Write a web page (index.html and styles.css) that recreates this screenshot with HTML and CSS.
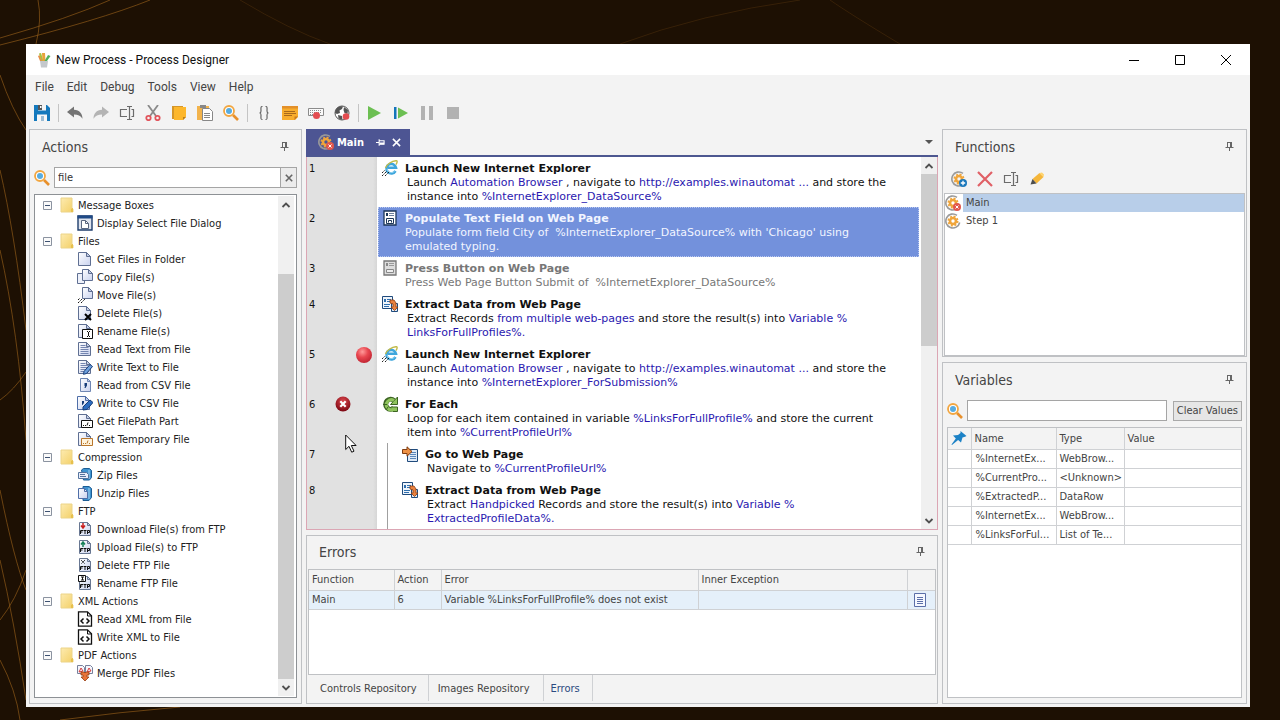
FILE: index.html
```html
<!DOCTYPE html>
<html lang="en">
<head>
  <meta charset="UTF-8">
  <meta name="viewport" content="width=device-width, initial-scale=1.0">
  <title>New Process - Process Designer</title>
  <link rel="stylesheet" href="styles.css">
</head>
<body>
  <!-- icon sprite -->
  <svg class="sprite" aria-hidden="true">
    <defs>
      <linearGradient id="paper" x1="0" y1="0" x2="1" y2="1">
        <stop offset="0" stop-color="#fff"/><stop offset="1" stop-color="#c9d2ee"/>
      </linearGradient>
      <linearGradient id="fold" x1="0" y1="0" x2="1" y2="1">
        <stop offset="0" stop-color="#fdebb0"/><stop offset="1" stop-color="#f3d068"/>
      </linearGradient>
      <radialGradient id="ball" cx="0.4" cy="0.3" r="0.7">
        <stop offset="0" stop-color="#ff9a9a"/><stop offset="0.5" stop-color="#e8464f"/><stop offset="1" stop-color="#c22634"/>
      </radialGradient>
      <radialGradient id="stopball" cx="0.5" cy="0.3" r="0.7">
        <stop offset="0" stop-color="#d9444b"/><stop offset="1" stop-color="#7c0712"/>
      </radialGradient>
    </defs>
    <symbol id="i-page" viewBox="0 0 16 16">
      <path d="M1.500 1.500h8l4 4v9h-12z" fill="url(#paper)" stroke="#5f6f92"/>
      <path d="M9.500 1.500v4h4z" fill="#c3cce4" stroke="#5f6f92"/>
    </symbol>
    <symbol id="i-folder" viewBox="0 0 14 16">
      <path d="M1 1h11v10l1 1v3H1z" fill="url(#fold)" stroke="#ecd488"/>
      <path d="M11 15v-3l2-1v4z" fill="#e7c04c"/>
    </symbol>
    <symbol id="i-minus" viewBox="0 0 9 9">
      <path d="M.5.5h8v8h-8z" fill="#fafafa" stroke="#8b93a0"/><path d="M2 4.500h5" stroke="#3d5172"/>
    </symbol>
    <symbol id="i-dialog" viewBox="0 0 16 16">
      <path d="M1 1h14v14H1z" fill="#dfe4ee" stroke="#1f3e6d" stroke-width="1.400"/><path d="M.5.5h15v3H.5z" fill="#1f4a86"/>
      <path d="M4.500 5.500h4l3 3v5h-7z" fill="#fff" stroke="#5a6680"/><path d="M8.500 5.500v3h3" fill="none" stroke="#5a6680"/>
    </symbol>
    <symbol id="i-copyfile" viewBox="0 0 16 16">
      <path d="M.5 4.500h7v10h-7z" fill="#eef1fa" stroke="#5f6f92"/>
      <path d="M5.500.5h6l4 4v7h-10z" fill="url(#paper)" stroke="#5f6f92"/><path d="M11.500.5v4h4z" fill="#c3cce4" stroke="#5f6f92"/>
    </symbol>
    <symbol id="i-movefile" viewBox="0 0 16 16">
      <path d="M5.500.5h6l4 4v7h-10z" fill="url(#paper)" stroke="#5f6f92"/><path d="M11.500.5v4h4z" fill="#c3cce4" stroke="#5f6f92"/>
      <path d="M1 13l2-2M1 16l4-4M4 16l4-4" stroke="#111" stroke-dasharray="1.500 .7"/>
    </symbol>
    <symbol id="i-delfile" viewBox="0 0 16 16">
      <use href="#i-page"/><path d="M8 9l6 6M14 9l-6 6" stroke="#000" stroke-width="2"/>
    </symbol>
    <symbol id="i-renfile" viewBox="0 0 16 16">
      <use href="#i-page"/><path d="M5.500 6.500h10v9h-10z" fill="#fff" stroke="#111"/>
      <path d="M10 8.500h1m1 0h1M11.500 9v4M10 13.500h1m1 0h1" stroke="#111"/>
    </symbol>
    <symbol id="i-text" viewBox="0 0 16 16">
      <use href="#i-page"/><path d="M3.500 4.500h5M3.500 6.500h8M3.500 8.500h8M3.500 10.500h8M3.500 12.500h8" stroke="#7485b0"/>
    </symbol>
    <symbol id="i-writetext" viewBox="0 0 16 16">
      <use href="#i-text"/><path d="M7 12.500l6-7 2.500 2-6 7-3 .8z" fill="#6fa0dc" stroke="#173d78"/>
    </symbol>
    <symbol id="i-csv" viewBox="0 0 16 16">
      <path d="M3.500 1.500h7l3 3v10h-10z" fill="url(#paper)" stroke="#6f86b3"/><path d="M10.500 1.500v3h3z" fill="#c3cce4" stroke="#6f86b3"/>
      <path d="M7.500 6H10v2.500L8.500 11H7.500l.5-2h-.5z" fill="#173d78"/>
    </symbol>
    <symbol id="i-writecsv" viewBox="0 0 16 16">
      <path d="M.5 1.500h8l4 4v9H.5z" fill="url(#paper)" stroke="#4f6ea8"/><path d="M8.500 1.500v4h4z" fill="#c3cce4" stroke="#4f6ea8"/>
      <path d="M5 6h2v2l-1.500 2H5z" fill="#173d78"/><path d="M6 12l7-7 3 2.500-6 7-4 .5z" fill="#2c6cc0" stroke="#173d78"/>
    </symbol>
    <symbol id="i-pathpart" viewBox="0 0 16 16">
      <use href="#i-page"/><path d="M4.500 7.500h11v7h-11z" fill="#fff" stroke="#111"/><path d="M6 12.500h1m1 0h1m1 0l1-3M12 12.500h1" stroke="#111"/>
    </symbol>
    <symbol id="i-temp" viewBox="0 0 16 16">
      <use href="#i-page"/><path d="M4.500 7.500h11v7h-11z" fill="#fff3dc" stroke="#b9762b"/><path d="M6 12.500h1m1 0h1m1 0l1-3M12 12.500h1" stroke="#b9762b"/>
    </symbol>
    <symbol id="i-zip" viewBox="0 0 16 16">
      <path d="M4.500 3l2-1.500h6l2 2v7l-2 2.500h-6z" fill="#3f93cf" stroke="#1c5d95"/><path d="M12 3v9" stroke="#a8d4f2"/>
      <path d="M1.500 5.500h8l2 2v4h-10z" fill="#e8eefb" stroke="#56749e"/><path d="M3 7.500h5M3 9.500h6" stroke="#56749e"/>
    </symbol>
    <symbol id="i-unzip" viewBox="0 0 16 16">
      <path d="M6 1.500h6l2.500 2v9l-2.500 3H6z" fill="#3f93cf" stroke="#1c5d95"/><path d="M12 3v11" stroke="#a8d4f2"/>
      <path d="M1.500 3.500h6l3 3v7h-9z" fill="url(#paper)" stroke="#4f6ea8"/><path d="M7.500 3.500v3h3" fill="none" stroke="#4f6ea8"/>
    </symbol>
    <symbol id="i-ftp" viewBox="0 0 16 16">
      <path d="M2.500 1.500h8l3 3v10h-11z" fill="url(#paper)" stroke="#687792"/><path d="M10.500 1.500v3h3z" fill="#c3cce4" stroke="#687792"/>
      <path d="M3.500 13V9.500H6M3.500 11h2M6.500 9.500h3M8 9.500V13M10.500 13V9.500h2v2h-2" fill="none" stroke="#111"/>
    </symbol>
    <symbol id="i-ftpdown" viewBox="0 0 16 16"><use href="#i-ftp"/><path d="M6 2v5M4 4.500L6 7l2-2.500" fill="none" stroke="#c81e1e" stroke-width="1.500"/></symbol>
    <symbol id="i-ftpup" viewBox="0 0 16 16"><use href="#i-ftp"/><path d="M6 8V3M4 5.500L6 3l2 2.500" fill="none" stroke="#16805a" stroke-width="1.500"/></symbol>
    <symbol id="i-ftpdel" viewBox="0 0 16 16"><use href="#i-ftp"/><path d="M4 3l4 4M8 3L4 7" stroke="#222" stroke-dasharray="1.200 .5"/></symbol>
    <symbol id="i-ftpren" viewBox="0 0 16 16"><use href="#i-ftp"/><path d="M1.500.5h7v6h-7z" fill="#fff" stroke="#111"/><path d="M4 2h3M5.500 2v3M4 5h3" stroke="#111"/></symbol>
    <symbol id="i-xml" viewBox="0 0 16 16">
      <path d="M1.500.8h9l4 4v10.400h-13z" fill="#fff" stroke="#111" stroke-width="1.300"/><path d="M10.500 1v4h4" fill="none" stroke="#111"/>
      <path d="M6.500 7.500L4 10l2.500 2.500M9.500 7.500L12 10l-2.500 2.500" fill="none" stroke="#111" stroke-width="1.500"/>
    </symbol>
    <symbol id="i-pdf" viewBox="0 0 16 16">
      <path d="M.5.500h5l2 2v6h-7zM8.500.500h5l2 2v6h-7z" fill="#f4f5fb" stroke="#77819c"/>
      <path d="M2 7l2-4 2 3-4 1M10 7l2-4 2 3-4 1" fill="none" stroke="#d93a3a"/>
      <path d="M4 7h3l1 1 1-1h3v3h-2v2h2l-4 4-4-4h2v-2H4z" fill="#e8743a" stroke="#963c12" stroke-width=".8"/>
    </symbol>

    <symbol id="i-app" viewBox="0 0 16 16">
      <path d="M3 1.500l2-.5 2.500 8H5z" fill="#a9c23f"/><path d="M6 1h3l.5 8h-3z" fill="#e8a33a"/><path d="M8.500 9l3.500-6 2.500 1-3.500 5z" fill="#4fb05a"/>
      <path d="M2 4l1.500-.8L6 9H4z" fill="#e58f45"/><path d="M4 9h8l-1 6.500H5z" fill="#c4c8cc"/>
    </symbol>
    <symbol id="i-save" viewBox="0 0 16 16">
      <path d="M0 0h13l3 3v13H0z" fill="#1479bd"/><path d="M4 0h8v5.500H4z" fill="#f4f4f4"/><path d="M4 0h4v5H4z" fill="#555"/><path d="M6 1h1.500v2H6z" fill="#fff"/>
      <path d="M3 9.500h10V16H3z" fill="#f7f7f7"/><path d="M7 11h3v5H7z" fill="#9bbcd4"/>
    </symbol>
    <symbol id="i-undo" viewBox="0 0 16 16"><path d="M0 7l7-5.500v3.300c5.500.3 8.500 3.800 8.500 9C13.500 10.600 11 9.500 7 9.500v3z" fill="#747474"/></symbol>
    <symbol id="i-redo" viewBox="0 0 16 16"><path d="M16 7L9 1.500v3.300C3.500 5.100.5 8.600.5 13.800 2.500 10.600 5 9.500 9 9.500v3z" fill="#b4b4b4"/></symbol>
    <symbol id="i-rename" viewBox="0 0 16 16"><path d="M8 4.500H1.500v7H8M12.500 4.500h2v7h-2M8 1.500h5M10.500 1.500v13M8 14.500h5" fill="none" stroke="#6b6b6b" stroke-width="1.200"/></symbol>
    <symbol id="i-cut" viewBox="0 0 16 16">
      <path d="M3 0l8 11M13 0L5 11" stroke="#8a8a8a" stroke-width="1.800"/><circle cx="3.500" cy="13" r="2.200" fill="none" stroke="#e2545c" stroke-width="1.800"/><circle cx="12.500" cy="13" r="2.200" fill="none" stroke="#e2545c" stroke-width="1.800"/>
    </symbol>
    <symbol id="i-copy" viewBox="0 0 16 16"><path d="M1 1h11v13H1z" fill="#d59628"/><path d="M3 2h12v10l-3 3H3z" fill="#fdb72b"/><path d="M12 12h3l-3 3z" fill="#b97f1c"/></symbol>
    <symbol id="i-paste" viewBox="0 0 16 16"><path d="M0 1h12v14H0z" fill="#f2b34c"/><path d="M3 0h6v3H3z" fill="#888"/><path d="M5.500 3.500h7l3 3v9h-10z" fill="#fff" stroke="#888"/><path d="M7 8.500h6M7 10.500h6M7 12.500h6" stroke="#888"/></symbol>
    <symbol id="i-search" viewBox="0 0 16 16"><path d="M10 10l5 5" stroke="#e8902c" stroke-width="2.600"/><circle cx="6" cy="6" r="5" fill="#fff" stroke="#f2a640" stroke-width="1.800"/><circle cx="6" cy="6" r="3" fill="#58ace0"/></symbol>
    <symbol id="i-braces" viewBox="0 0 16 16"><path d="M6.500 1.500H6C4.500 1.500 5 4 5 6S4 8 3.500 8C4 8 5 8 5 10s-.5 4.500 1 4.500h.5M9.500 1.500h.5c1.500 0 1 2.500 1 4.500s1 2 1.500 2c-.5 0-1.500 0-1.500 2s.5 4.500-1 4.500h-.5" fill="none" stroke="#666" stroke-width="1.200"/></symbol>
    <symbol id="i-note" viewBox="0 0 16 16"><path d="M0 1h16v11l-3 3H0z" fill="#f8ad2d"/><path d="M0 1h16v2.500H0z" fill="#e3902a"/><path d="M2 6.500h11M2 8.500h12M2 10.500h8" stroke="#a86a1c"/><path d="M12.500 11.500H16L12.500 15z" fill="#c87a1c"/></symbol>
    <symbol id="i-keys" viewBox="0 0 16 16"><path d="M.5 3.500h15v7H.5z" fill="#fafafa" stroke="#8b8b8b"/><path d="M2 5.500h12M2 7.500h12M2 9.500h3" stroke="#8b8b8b" stroke-dasharray="1 1"/><circle cx="8.500" cy="10.500" r="3.500" fill="#e44c50"/></symbol>
    <symbol id="i-globe" viewBox="0 0 16 16"><circle cx="8" cy="8" r="7" fill="#fff" stroke="#555"/><path d="M1.500 5C4 1 7 .8 9 1.500L8 4 5.500 5.500 6 8l-3 1-2-1zM10 2l4 3-.5 4-3-1-1-3zM4 10l4 1 .5 4-4-1.500z" fill="#555"/><circle cx="12" cy="11.500" r="3.300" fill="#e44c50"/></symbol>
    <symbol id="i-play" viewBox="0 0 16 16"><path d="M1 1l13 7-13 7z" fill="#6cbf52"/></symbol>
    <symbol id="i-step" viewBox="0 0 16 16"><path d="M1 2h2.500v12H1z" fill="#1475ba"/><path d="M5 2.500L15 8 5 13.500z" fill="#6cbf52"/></symbol>
    <symbol id="i-pause" viewBox="0 0 16 16"><path d="M2 1h4v14H2zM10 1h4v14h-4z" fill="#b2b2b2"/></symbol>
    <symbol id="i-stop" viewBox="0 0 16 16"><path d="M2 2h12v12H2z" fill="#b2b2b2"/></symbol>
    <symbol id="i-gear" viewBox="0 0 16 16">
      <path d="M12 2.300A7 7 0 1 0 14.700 9.500" fill="none" stroke="#9a9a9a" stroke-width="1.600"/>
      <circle cx="8" cy="8" r="3" fill="none" stroke="#f0a53a" stroke-width="2.600"/><circle cx="8" cy="8" r="4.700" fill="none" stroke="#f0a53a" stroke-width="1.600" stroke-dasharray="2 1.690"/>
    </symbol>
    <symbol id="i-gearx" viewBox="0 0 16 16"><use href="#i-gear"/><circle cx="12" cy="12" r="4" fill="#e2574c"/><path d="M10.500 10.500l3 3M13.500 10.500l-3 3" stroke="#fff"/></symbol>
    <symbol id="i-gearadd" viewBox="0 0 16 16"><use href="#i-gear"/><circle cx="12" cy="12" r="4" fill="#1b78bb"/><path d="M12 9.800v4.400M9.800 12h4.400" stroke="#fff" stroke-width="1.300"/></symbol>
    <symbol id="i-redx" viewBox="0 0 16 16"><path d="M1 1l14 14M15 1L1 15" stroke="#e06066" stroke-width="2.200"/></symbol>
    <symbol id="i-pencil" viewBox="0 0 16 16"><path d="M3.500 8l7-6 4 4-7 6.500z" fill="#f5b63a"/><path d="M10.500 2l2.500-.5L15 3.500 14.500 6z" fill="#ffd36b"/><path d="M1.500 13.500l2-5.500 4 4.500z" fill="#4d4d4d"/></symbol>
    <symbol id="i-pin" viewBox="0 0 9 9"><path d="M2.500.5v5M6.500.5v5M2 .5h5M.5 5.500h8M4.500 6v3" fill="none" stroke="#666"/><path d="M5 1h1.500v4H5z" fill="#666"/></symbol>
    <symbol id="i-bluepin" viewBox="0 0 16 16"><path d="M9.500 1l6 5-1.500.7-2.500.8-1.500 5-2.900-2.400L1 15l-.5-.5 4.300-6L2 5.500l5-.5 2.500-2z" fill="#1c82c6"/></symbol>
    <symbol id="i-up" viewBox="0 0 10 10"><path d="M1.500 7L5 3.500 8.500 7" fill="none" stroke="#505050" stroke-width="1.800"/></symbol>
    <symbol id="i-down" viewBox="0 0 10 10"><path d="M1.500 3L5 6.500 8.500 3" fill="none" stroke="#505050" stroke-width="1.800"/></symbol>

    <symbol id="i-ie" viewBox="0 0 16 16">
      <path d="M13.500 11A4.800 4.800 0 1 1 14 7.700H6" fill="none" stroke="#3fa6dc" stroke-width="2.600"/>
      <path d="M13 10.500A4.300 4.300 0 0 1 5 9" fill="none" stroke="#8fd3f2"/>
      <path d="M3.500 8C4.500 4.500 10 .5 14.500.7 15.700 1 15 3 14 4.500" fill="none" stroke="#c2bb4a" stroke-width="1.400"/>
      <path d="M0 13l3-3M0 16l5-5M3 16l4-4" stroke="#222" stroke-dasharray="1.500 .6"/>
    </symbol>
    <symbol id="i-form" viewBox="0 0 16 16">
      <path d="M2 1h12v14H2z" fill="#fff" stroke="#1c3659" stroke-width="1.300"/><path d="M4 3h2v3H4z" fill="#1c3659"/><path d="M7 3.500h5M7 5.500h5" stroke="#6c7f9b"/>
      <path d="M4.500 8.500h7v5h-7z" fill="#fff" stroke="#1c3659"/><path d="M6.500 12.500v-2h3v2" fill="none" stroke="#1c3659"/>
    </symbol>
    <symbol id="i-formgrey" viewBox="0 0 16 16">
      <path d="M2 1h12v14H2z" fill="#ddd" stroke="#777" stroke-width="1.300"/><path d="M4 3h2v3H4z" fill="#888"/><path d="M7 3.500h5M7 5.500h5" stroke="#999"/><path d="M4.500 9.500h7v3h-7z" fill="#eee" stroke="#888"/>
    </symbol>
    <symbol id="i-extract" viewBox="0 0 16 16">
      <path d="M.5.5h10v12H.5z" fill="#eef4fb" stroke="#1f4a7c"/><path d="M2 3h2v3H2z" fill="#2f6fae"/><path d="M5 3.500h4M5 5.500h4M2 8.500h6M2 10.500h5" stroke="#2f6fae"/>
      <path d="M9.500 7.500h6v8h-6z" fill="#dbe9f7" stroke="#1f4a7c"/><path d="M8 4h4l2 3v4h2l-3.500 3.500L9 11h2V8L8 7z" fill="#e98240" stroke="#8a3c12" stroke-width=".8"/>
    </symbol>
    <symbol id="i-loop" viewBox="0 0 16 16">
      <path d="M12 4.500A5 5 0 1 0 12 12" fill="none" stroke="#3c6423" stroke-width="5"/>
      <path d="M11 15.500h4.500v-4.500H9" fill="#8fc45c" stroke="#3c6423"/>
      <path d="M8.500 8.500h7V1z" fill="#8fc45c" stroke="#3c6423"/>
      <path d="M12 4.500A5 5 0 1 0 12 13" fill="none" stroke="#8fc45c" stroke-width="3"/>
      <path d="M1 8.500h4M4 14l2-3" stroke="#3c6423"/>
    </symbol>
    <symbol id="i-goto" viewBox="0 0 16 16">
      <path d="M5.500 3.500h10v12h-10z" fill="#dfeaf7" stroke="#1f4a7c"/><path d="M8 6.500h6M8 8.500h6M8 10.500h6M8 12.500h6" stroke="#5b86ba"/>
      <path d="M.5 3.500H5V.8l5 4.700-5 4.700V7.500H.5z" fill="#ee9145" stroke="#7e3c12"/>
    </symbol>
    <symbol id="i-break" viewBox="0 0 16 16"><circle cx="8" cy="8" r="8" fill="url(#ball)"/></symbol>
    <symbol id="i-error" viewBox="0 0 16 16"><circle cx="8" cy="8" r="7.500" fill="url(#stopball)"/><path d="M5.300 5.300l5.400 5.400M10.700 5.300l-5.400 5.400" stroke="#fff" stroke-width="2.200"/></symbol>
    <symbol id="i-cursor" viewBox="0 0 12 19"><path d="M.7 1v14.500L4 12.300l2.700 5.900 2.300-1-2.700-5.700h4.800z" fill="#fff" stroke="#111"/></symbol>
    <symbol id="i-detail" viewBox="0 0 12 14"><path d="M.5.5h11v13H.5z" fill="#f5f8ff" stroke="#5b6fa8"/><path d="M3 4.500h6M3 6.500h6M3 8.500h6M3 10.500h6" stroke="#5b6fa8"/></symbol>
  </svg>

  <!-- desktop wallpaper -->
  <svg class="wallpaper" viewBox="0 0 1280 720" preserveAspectRatio="none" aria-hidden="true">
    <g fill="none" stroke="#a0651c" stroke-opacity=".6">
      <path d="M0 38Q70 18 110 0M0 45Q100 20 150 0M36 44Q42 20 38 0M0 75Q12 110 26 130"/>
      <path d="M0 170Q14 230 26 330M0 250Q18 330 26 440M0 400Q14 390 26 372M0 490Q14 560 26 590M0 620Q16 600 26 570M0 560Q14 620 26 700"/>
      <path d="M240 0Q290 30 330 44M620 44Q700 14 800 0M900 44Q850 14 830 0" stroke-opacity=".2"/>
      <path d="M60 720Q120 712 180 707M0 660Q16 690 20 720"/>
    </g>
  </svg>

  <main class="window">
    <header class="titlebar">
      <svg class="icon"><use href="#i-app"/></svg>
      <h1>New Process - Process Designer</h1>
      <div class="window-buttons">
        <button aria-label="Minimize"><svg viewBox="0 0 10 10"><path d="M0 5.500h10" stroke="#000"/></svg></button>
        <button aria-label="Maximize"><svg viewBox="0 0 10 10"><path d="M.5.5h9v9h-9z" fill="none" stroke="#000"/></svg></button>
        <button aria-label="Close"><svg viewBox="0 0 10 10"><path d="M0 0l10 10M10 0L0 10" stroke="#000"/></svg></button>
      </div>
    </header>

    <nav class="menu">
      <button>File</button><button>Edit</button><button>Debug</button><button>Tools</button><button>View</button><button>Help</button>
    </nav>

    <div class="toolbar main-toolbar">
      <button aria-label="Save"><svg class="icon"><use href="#i-save"/></svg></button>
      <span class="sep"></span>
      <button aria-label="Undo"><svg class="icon"><use href="#i-undo"/></svg></button>
      <button aria-label="Redo"><svg class="icon"><use href="#i-redo"/></svg></button>
      <button aria-label="Rename"><svg class="icon"><use href="#i-rename"/></svg></button>
      <button aria-label="Cut"><svg class="icon"><use href="#i-cut"/></svg></button>
      <button aria-label="Copy"><svg class="icon"><use href="#i-copy"/></svg></button>
      <button aria-label="Paste"><svg class="icon"><use href="#i-paste"/></svg></button>
      <button aria-label="Find"><svg class="icon"><use href="#i-search"/></svg></button>
      <span class="sep"></span>
      <button aria-label="Variables"><svg class="icon"><use href="#i-braces"/></svg></button>
      <button aria-label="Comment"><svg class="icon"><use href="#i-note"/></svg></button>
      <button aria-label="Macro recorder"><svg class="icon"><use href="#i-keys"/></svg></button>
      <button aria-label="Web recorder"><svg class="icon"><use href="#i-globe"/></svg></button>
      <span class="sep"></span>
      <button aria-label="Run"><svg class="icon"><use href="#i-play"/></svg></button>
      <button aria-label="Step"><svg class="icon"><use href="#i-step"/></svg></button>
      <button aria-label="Pause"><svg class="icon"><use href="#i-pause"/></svg></button>
      <button aria-label="Stop"><svg class="icon"><use href="#i-stop"/></svg></button>
    </div>

    <div class="workspace">
      <section class="panel actions">
        <div class="panel-head"><h2>Actions</h2><button aria-label="Pin"><svg class="pin"><use href="#i-pin"/></svg></button></div>
        <div class="search">
          <svg class="icon"><use href="#i-search"/></svg>
          <div class="search-box">
            <input type="text" value="file" aria-label="Search actions">
            <button aria-label="Clear"><svg viewBox="0 0 10 10"><path d="M1 1l8 8M9 1L1 9" stroke="#666" stroke-width="2"/></svg></button>
          </div>
        </div>
        <div class="tree-box">
          <ul class="tree">
            <li class="group"><svg class="toggle"><use href="#i-minus"/></svg><svg class="folder"><use href="#i-folder"/></svg>Message Boxes</li>
            <li><svg class="icon"><use href="#i-dialog"/></svg>Display Select File Dialog</li>
            <li class="group"><svg class="toggle"><use href="#i-minus"/></svg><svg class="folder"><use href="#i-folder"/></svg>Files</li>
            <li><svg class="icon"><use href="#i-page"/></svg>Get Files in Folder</li>
            <li><svg class="icon"><use href="#i-copyfile"/></svg>Copy File(s)</li>
            <li><svg class="icon"><use href="#i-movefile"/></svg>Move File(s)</li>
            <li><svg class="icon"><use href="#i-delfile"/></svg>Delete File(s)</li>
            <li><svg class="icon"><use href="#i-renfile"/></svg>Rename File(s)</li>
            <li><svg class="icon"><use href="#i-text"/></svg>Read Text from File</li>
            <li><svg class="icon"><use href="#i-writetext"/></svg>Write Text to File</li>
            <li><svg class="icon"><use href="#i-csv"/></svg>Read from CSV File</li>
            <li><svg class="icon"><use href="#i-writecsv"/></svg>Write to CSV File</li>
            <li><svg class="icon"><use href="#i-pathpart"/></svg>Get FilePath Part</li>
            <li><svg class="icon"><use href="#i-temp"/></svg>Get Temporary File</li>
            <li class="group"><svg class="toggle"><use href="#i-minus"/></svg><svg class="folder"><use href="#i-folder"/></svg>Compression</li>
            <li><svg class="icon"><use href="#i-zip"/></svg>Zip Files</li>
            <li><svg class="icon"><use href="#i-unzip"/></svg>Unzip Files</li>
            <li class="group"><svg class="toggle"><use href="#i-minus"/></svg><svg class="folder"><use href="#i-folder"/></svg>FTP</li>
            <li><svg class="icon"><use href="#i-ftpdown"/></svg>Download File(s) from FTP</li>
            <li><svg class="icon"><use href="#i-ftpup"/></svg>Upload File(s) to FTP</li>
            <li><svg class="icon"><use href="#i-ftpdel"/></svg>Delete FTP File</li>
            <li><svg class="icon"><use href="#i-ftpren"/></svg>Rename FTP File</li>
            <li class="group"><svg class="toggle"><use href="#i-minus"/></svg><svg class="folder"><use href="#i-folder"/></svg>XML Actions</li>
            <li><svg class="icon"><use href="#i-xml"/></svg>Read XML from File</li>
            <li><svg class="icon"><use href="#i-xml"/></svg>Write XML to File</li>
            <li class="group"><svg class="toggle"><use href="#i-minus"/></svg><svg class="folder"><use href="#i-folder"/></svg>PDF Actions</li>
            <li><svg class="icon"><use href="#i-pdf"/></svg>Merge PDF Files</li>
          </ul>
          <div class="scrollbar tree-scroll">
            <button aria-label="Scroll up"><svg><use href="#i-up"/></svg></button>
            <div class="track"><div class="thumb"></div></div>
            <button aria-label="Scroll down"><svg><use href="#i-down"/></svg></button>
          </div>
        </div>
      </section>

      <div class="column">
        <section class="editor">
          <div class="tabs">
            <div class="tab">
              <svg class="icon"><use href="#i-gearx"/></svg><span>Main</span>
              <button aria-label="Pin tab"><svg viewBox="0 0 10 10"><path d="M0 5h3M3.500 1.500v7M4 3h5v4H4" fill="none" stroke="#fff" stroke-width="1.200"/><path d="M4 5h5v2H4z" fill="#fff"/></svg></button>
              <button aria-label="Close tab"><svg viewBox="0 0 10 10"><path d="M1 1l8 8M9 1L1 9" stroke="#fff" stroke-width="1.700"/></svg></button>
            </div>
            <button class="tab-list" aria-label="Tab list"><svg viewBox="0 0 8 4"><path d="M0 0h8L4 4z" fill="#555"/></svg></button>
          </div>
          <div class="code-box">
            <ol class="code">
              <li>
                <div class="gutter"><span>1</span></div>
                <div class="step"><svg class="icon"><use href="#i-ie"/></svg>
                  <div><h3>Launch New Internet Explorer</h3>
                  <p>Launch <a href="#">Automation Browser</a> , navigate to <a href="#">http://examples.winautomat ...</a> and store the<br>instance into <a href="#">%InternetExplorer_DataSource%</a></p></div></div>
              </li>
              <li class="selected">
                <div class="gutter"><span>2</span></div>
                <div class="step"><svg class="icon"><use href="#i-form"/></svg>
                  <div><h3>Populate Text Field on Web Page</h3>
                  <p>Populate form field City of &nbsp;%InternetExplorer_DataSource% with 'Chicago' using<br>emulated typing.</p></div></div>
              </li>
              <li class="disabled">
                <div class="gutter"><span>3</span></div>
                <div class="step"><svg class="icon"><use href="#i-formgrey"/></svg>
                  <div><h3>Press Button on Web Page</h3>
                  <p>Press Web Page Button Submit of &nbsp;%InternetExplorer_DataSource%</p></div></div>
              </li>
              <li>
                <div class="gutter"><span>4</span></div>
                <div class="step"><svg class="icon"><use href="#i-extract"/></svg>
                  <div><h3>Extract Data from Web Page</h3>
                  <p>Extract Records <a href="#">from multiple web-pages</a> and store the result(s) into <a href="#">Variable %<br>LinksForFullProfiles%.</a></p></div></div>
              </li>
              <li>
                <div class="gutter"><span>5</span><svg class="icon breakpoint"><use href="#i-break"/></svg></div>
                <div class="step"><svg class="icon"><use href="#i-ie"/></svg>
                  <div><h3>Launch New Internet Explorer</h3>
                  <p>Launch <a href="#">Automation Browser</a> , navigate to <a href="#">http://examples.winautomat ...</a> and store the<br>instance into <a href="#">%InternetExplorer_ForSubmission%</a></p></div></div>
              </li>
              <li>
                <div class="gutter"><span>6</span><svg class="icon error"><use href="#i-error"/></svg><svg class="cursor"><use href="#i-cursor"/></svg></div>
                <div class="step"><svg class="icon"><use href="#i-loop"/></svg>
                  <div><h3>For Each</h3>
                  <p>Loop for each item contained in variable <a href="#">%LinksForFullProfile%</a> and store the current<br>item into <a href="#">%CurrentProfileUrl%</a></p></div></div>
              </li>
              <li class="nested">
                <div class="gutter"><span>7</span></div>
                <div class="step"><svg class="icon"><use href="#i-goto"/></svg>
                  <div><h3>Go to Web Page</h3>
                  <p>Navigate to <a href="#">%CurrentProfileUrl%</a></p></div></div>
              </li>
              <li class="nested">
                <div class="gutter"><span>8</span></div>
                <div class="step"><svg class="icon"><use href="#i-extract"/></svg>
                  <div><h3>Extract Data from Web Page</h3>
                  <p>Extract <a href="#">Handpicked</a> Records and store the result(s) into <a href="#">Variable %<br>ExtractedProfileData%.</a></p></div></div>
              </li>
            </ol>
            <div class="scrollbar code-scroll">
              <button aria-label="Scroll up"><svg><use href="#i-up"/></svg></button>
              <div class="track"><div class="thumb"></div></div>
              <button aria-label="Scroll down"><svg><use href="#i-down"/></svg></button>
            </div>
          </div>
        </section>

        <section class="panel errors">
          <div class="panel-head"><h2>Errors</h2><button aria-label="Pin"><svg class="pin"><use href="#i-pin"/></svg></button></div>
          <div class="table-box">
            <table>
              <colgroup><col class="c-func"><col class="c-action"><col class="c-error"><col class="c-inner"><col></colgroup>
              <thead><tr><th>Function</th><th>Action</th><th>Error</th><th>Inner Exception</th><th></th></tr></thead>
              <tbody><tr><td>Main</td><td>6</td><td>Variable %LinksForFullProfile% does not exist</td><td></td><td><button class="detail" aria-label="Details"><svg><use href="#i-detail"/></svg></button></td></tr></tbody>
            </table>
          </div>
          <div class="bottom-tabs">
            <button>Controls Repository</button><button>Images Repository</button><button class="active">Errors</button>
          </div>
        </section>
      </div>

      <div class="column">
        <section class="panel functions">
          <div class="panel-head"><h2>Functions</h2><button aria-label="Pin"><svg class="pin"><use href="#i-pin"/></svg></button></div>
          <div class="toolbar">
            <button aria-label="Add function"><svg class="icon"><use href="#i-gearadd"/></svg></button>
            <button aria-label="Delete function"><svg class="icon"><use href="#i-redx"/></svg></button>
            <button aria-label="Rename function"><svg class="icon"><use href="#i-rename"/></svg></button>
            <button aria-label="Edit function"><svg class="icon"><use href="#i-pencil"/></svg></button>
          </div>
          <ul class="function-list">
            <li class="current"><svg class="icon"><use href="#i-gearx"/></svg><span>Main</span></li>
            <li><svg class="icon"><use href="#i-gear"/></svg><span>Step 1</span></li>
          </ul>
        </section>

        <section class="panel variables">
          <div class="panel-head"><h2>Variables</h2><button aria-label="Pin"><svg class="pin"><use href="#i-pin"/></svg></button></div>
          <div class="search">
            <svg class="icon"><use href="#i-search"/></svg>
            <div class="search-box"><input type="text" aria-label="Search variables"></div>
            <button class="clear">Clear Values</button>
          </div>
          <div class="table-box">
            <table>
              <colgroup><col class="c-pin"><col class="c-name"><col class="c-type"><col></colgroup>
              <thead><tr><th><svg class="icon"><use href="#i-bluepin"/></svg></th><th>Name</th><th>Type</th><th>Value</th></tr></thead>
              <tbody>
                <tr><td></td><td>%InternetEx...</td><td>WebBrow...</td><td></td></tr>
                <tr><td></td><td>%CurrentPro...</td><td>&lt;Unknown&gt;</td><td></td></tr>
                <tr><td></td><td>%ExtractedP...</td><td>DataRow</td><td></td></tr>
                <tr><td></td><td>%InternetEx...</td><td>WebBrow...</td><td></td></tr>
                <tr><td></td><td>%LinksForFul...</td><td>List of Te...</td><td></td></tr>
              </tbody>
            </table>
          </div>
        </section>
      </div>
    </div>
  </main>
</body>
</html>
```
FILE: styles.css
```css
* {
  box-sizing: border-box;
}

body {
  margin: 0;
  min-height: 100vh;
  padding: 44px 30px 13px 26px;
  display: flex;
  background: #1d1003;
  color: #444;
  font-family: "DejaVu Sans Condensed", "Noto Sans", sans-serif;
  font-size: 11px;
}

h1, h2, h3, p, ul, ol {
  margin: 0;
  padding: 0;
  font-weight: normal;
  list-style: none;
}

button {
  display: flex;
  align-items: center;
  justify-content: center;
  padding: 0;
  border: none;
  background: none;
  color: inherit;
  font: inherit;
  cursor: pointer;
}

svg {
  display: block;
  flex: none;
}

.icon {
  width: 16px;
  height: 16px;
}

.sprite {
  position: absolute;
  width: 0;
  height: 0;
}

.wallpaper {
  position: fixed;
  top: 0;
  left: 0;
  width: 100%;
  height: 100%;
  z-index: -1;
}

.window {
  flex: 1;
  min-width: 0;
  display: flex;
  flex-direction: column;
  background: #f3f3f3;
}

/* title bar, menu, toolbar */
.titlebar {
  display: flex;
  align-items: center;
  gap: 4px;
  height: 31px;
  padding-left: 10px;
  background: #fff;
}

.titlebar h1 {
  flex: 1;
  color: #111;
  font-family: Roboto, sans-serif;
  font-size: 12px;
}

.window-buttons {
  display: flex;
  padding-right: 1px;
}

.window-buttons button {
  width: 46px;
  height: 31px;
}

.window-buttons svg {
  width: 10px;
  height: 10px;
}

.menu {
  display: flex;
  gap: 13px;
  height: 24px;
  padding-left: 9px;
  font-family: Roboto, sans-serif;
  font-size: 12px;
}

.toolbar {
  display: flex;
  align-items: center;
  height: 28px;
}

.toolbar button {
  width: 26px;
  height: 26px;
}

.main-toolbar {
  padding-left: 3px;
}

.sep {
  width: 7px;
  height: 18px;
  background: linear-gradient(#c4c4c4, #c4c4c4) center / 1px 100% no-repeat;
}

/* workspace */
.workspace {
  flex: 1;
  display: grid;
  grid-template-columns: 273px minmax(0, 1fr) 305px;
  column-gap: 4px;
  padding: 2px 3px 3px;
}

.column {
  display: flex;
  flex-direction: column;
  gap: 5px;
}

.panel {
  display: flex;
  flex-direction: column;
  border: 1px solid #bfc1c4;
  background: #f3f3f3;
}

.panel-head {
  display: flex;
  align-items: center;
  justify-content: space-between;
  height: 35px;
  padding: 0 12px 2px;
}

.panel-head h2 {
  font-size: 14px;
}

.pin {
  width: 9px;
  height: 9px;
}

.search {
  display: flex;
  align-items: center;
  gap: 4px;
  padding: 2px 4px 6px;
}

.search-box {
  flex: 1;
  min-width: 0;
  display: flex;
  height: 21px;
  border: 1px solid #a5a5a5;
  background: #fff;
}

.search-box input {
  flex: 1;
  min-width: 0;
  padding: 0 3px;
  border: none;
  outline: none;
  background: none;
  color: #333;
  font: inherit;
}

.search-box button {
  width: 16px;
  border-left: 1px solid #a5a5a5;
  background: #ececec;
}

.search-box button svg {
  width: 8px;
  height: 8px;
}

/* action tree */
.tree-box {
  flex: 1;
  display: flex;
  margin: 0 4px 5px;
  border: 1px solid #8d9195;
  background: #fff;
}

.tree {
  flex: 1;
  padding-top: 1px;
  color: #222;
}

.tree li {
  display: flex;
  align-items: center;
  gap: 4px;
  height: 18px;
  padding-left: 42px;
  white-space: nowrap;
}

.tree .group {
  padding-left: 8px;
}

.toggle {
  width: 9px;
  height: 9px;
  margin-right: 4px;
}

.folder {
  width: 14px;
  height: 16px;
}

.scrollbar {
  display: flex;
  flex-direction: column;
  width: 16px;
  background: #f0f0f0;
}

.scrollbar button {
  width: 100%;
  height: 17px;
}

.scrollbar button svg {
  width: 10px;
  height: 10px;
}

.track {
  flex: 1;
  display: flex;
  flex-direction: column;
}

.thumb {
  background: #cdcdcd;
}

.tree-scroll {
  margin: 1px 2px 1px 0;
}

.tree-scroll .track {
  justify-content: flex-end;
}

.tree-scroll .thumb {
  height: 87%;
}

/* editor */
.editor {
  flex: 1;
  display: flex;
  flex-direction: column;
}

.tabs {
  display: flex;
  align-items: center;
  justify-content: space-between;
  height: 28px;
  border-bottom: 2px solid #4d5790;
}

.tab {
  display: flex;
  align-items: center;
  gap: 3px;
  height: 26px;
  padding: 0 7px 0 12px;
  background: #4d5593;
  color: #fff;
  font-weight: bold;
}

.tab span {
  margin-right: 7px;
}

.tab button {
  width: 13px;
}

.tab svg:not(.icon) {
  width: 9px;
  height: 9px;
}

.tab-list {
  width: 18px;
}

.tab-list svg {
  width: 8px;
  height: 4px;
}

.code-box {
  flex: 1;
  display: flex;
  border: 1px solid #dba6b4;
  border-top: none;
  background: linear-gradient(90deg, #e1e1e1 66px, #d6d6d6 70px, #fff 70px);
}

.code {
  flex: 1;
  min-width: 0;
  color: #111;
  font-family: "DejaVu Sans", Verdana, sans-serif;
  line-height: 14px;
}

.code li {
  display: flex;
}

.gutter {
  position: relative;
  flex: none;
  width: 70px;
  padding: 5px 2px 3px;
  font-family: "DejaVu Sans Condensed", sans-serif;
}

.breakpoint {
  position: absolute;
  top: 4px;
  right: 5px;
}

.error {
  position: absolute;
  top: 3px;
  left: 28px;
}

.cursor {
  position: absolute;
  top: 41px;
  left: 38px;
  width: 12px;
  height: 19px;
}

.step {
  flex: 1;
  display: flex;
  gap: 7px;
  margin: 0 2px 0 1px;
  padding: 3px 4px;
  white-space: nowrap;
}

.step > div {
  padding-top: 2px;
}

.step h3 {
  font-size: 11px;
  font-weight: bold;
}

.step p {
  padding-left: 2px;
}

.step a {
  color: #2a18b0;
  text-decoration: none;
}

.selected .step {
  background: #7391dc;
  color: #f2f5ff;
  outline: 1px dotted #b9c8f0;
  outline-offset: -1px;
}

.disabled .step {
  color: #777;
}

.selected p, .disabled p {
  padding-left: 0;
}

.nested .step {
  margin-left: 10px;
  padding-left: 14px;
  border-left: 1px solid #a0a0a0;
}

.code-scroll .thumb {
  height: 51%;
}

/* tables */
.table-box {
  flex: 1;
  border: 1px solid #bfc1c4;
  background: #fff;
}

table {
  width: 100%;
  border-collapse: collapse;
  table-layout: fixed;
}

th, td {
  height: 19px;
  padding: 0 3px;
  border-right: 1px solid #cfd1d4;
  border-bottom: 1px solid #cfd1d4;
  text-align: left;
  font-weight: normal;
  white-space: nowrap;
}

th {
  height: 20px;
  background: #f3f3f3;
}

th:last-child, td:last-child {
  border-right: none;
}

.errors {
  height: 169px;
}

.errors .panel-head {
  height: 33px;
}

.errors .table-box {
  margin: 0 1px;
}

.errors tbody tr {
  background: #e5f0fa;
}

.c-func { width: 85px; }
.c-action { width: 47px; }
.c-error { width: 257px; }
.c-inner { width: 209px; }

.detail svg {
  width: 12px;
  height: 14px;
  margin-left: 3px;
}

.bottom-tabs {
  display: flex;
  height: 28px;
  padding-bottom: 2px;
}

.bottom-tabs button {
  padding: 0 13px 0 9px;
  border-right: 1px solid #cfd1d4;
}

.bottom-tabs button:first-child {
  padding: 0 11px 0 13px;
}

.bottom-tabs .active {
  padding: 0 12px 0 7px;
  color: #2a4a80;
}

/* right column */
.functions {
  height: 228px;
}

.functions .toolbar {
  padding-left: 3px;
}

.function-list {
  flex: 1;
  margin: 0 1px;
  border: 1px solid #bfc1c4;
  background: #fff;
}

.function-list li {
  display: flex;
  align-items: center;
  height: 18px;
}

.function-list span {
  flex: 1;
  margin-left: 2px;
  padding-left: 3px;
  line-height: 18px;
}

.function-list .current span {
  background: #b8cee9;
}

.variables {
  flex: 1;
}

.clear {
  height: 20px;
  margin-left: 2px;
  padding: 0 3px;
  border: 1px solid #a9a9a9;
  background: #e6e6e6;
}

.variables .table-box {
  margin: 0 4px 5px;
}

.variables th {
  height: 21px;
}

.variables td:nth-child(2) {
  padding-left: 4px;
}

.c-pin { width: 23px; }
.c-name { width: 85px; }
.c-type { width: 68px; }
```
